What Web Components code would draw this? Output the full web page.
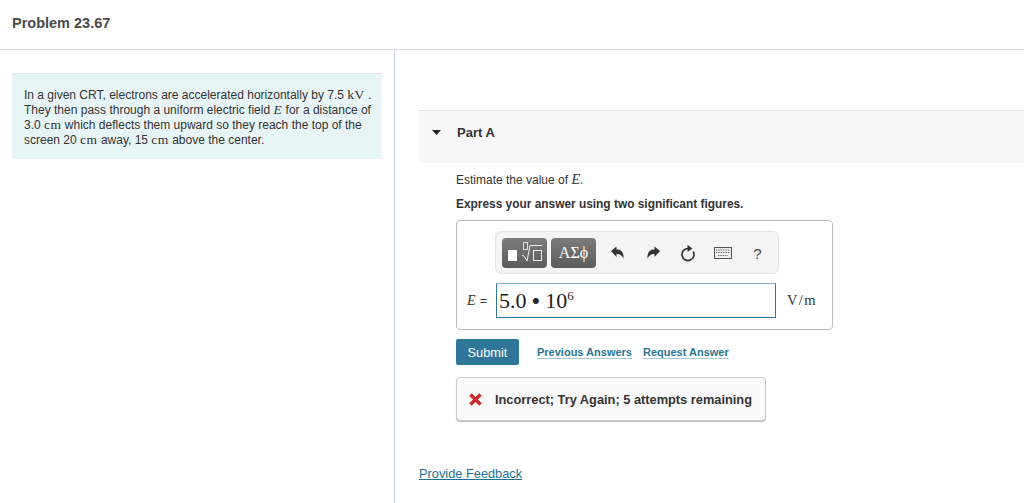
<!DOCTYPE html>
<html>
<head>
<meta charset="utf-8">
<style>
    html, body { margin: 0; height: 100%; background: #fff; overflow: hidden; }
    body { font-family: "Liberation Sans", Arial, sans-serif; color: #333; }
    b.m, i.m { font-family: "Liberation Serif", serif; font-weight: 400; font-size: 13.5px; line-height: 0; letter-spacing: 0.5px; }
    intro-panel div { white-space: nowrap; }
</style>
</head>
<body>
<problem-page>
    <problem-header slot="header">Problem 23.67</problem-header>
    <intro-panel slot="left">
        <div>In a given CRT, electrons are accelerated horizontally by 7.5&nbsp;<b class="m">kV</b>&nbsp;.</div>
        <div>They then pass through a uniform electric field <i class="m">E</i> for a distance of</div>
        <div>3.0&nbsp;<b class="m">cm</b> which deflects them upward so they reach the top of the</div>
        <div>screen 20&nbsp;<b class="m">cm</b> away, 15&nbsp;<b class="m">cm</b> above the center.</div>
    </intro-panel>
    <part-section slot="right"></part-section>
</problem-page>

<script>
class ProblemPage extends HTMLElement {
    connectedCallback() {
        this.attachShadow({ mode: 'open' });
        this.shadowRoot.innerHTML = `
            <style>
                :host { display: grid; grid-template-columns: 395px 1fr; grid-template-rows: 50px 453px; height: 503px; }
                .head { grid-column: 1 / 3; }
                .left { border-right: 1px solid #c5d5e4; padding: 23px 12px 0; }
                .right { padding-top: 60px; padding-left: 24px; }
            </style>
            <div class="head"><slot name="header"></slot></div>
            <div class="left"><slot name="left"></slot></div>
            <div class="right"><slot name="right"></slot></div>
        `;
    }
}

class ProblemHeader extends HTMLElement {
    connectedCallback() {
        this.attachShadow({ mode: 'open' });
        this.shadowRoot.innerHTML = `
            <style>
                :host { display: block; box-sizing: border-box; height: 50px; border-bottom: 1px solid #e0e0e0; padding: 14px 12px 0; font-size: 14.5px; line-height: 18px; font-weight: 700; color: #4a4a4a; }
            </style>
            <slot></slot>
        `;
    }
}

class IntroPanel extends HTMLElement {
    connectedCallback() {
        this.attachShadow({ mode: 'open' });
        this.shadowRoot.innerHTML = `
            <style>
                :host { display: block; box-sizing: border-box; width: 370px; height: 86px; background: #e8f5f7; border-top: 1px solid #e0e8ea; padding: 14px 10px 0 12px; font-size: 12px; line-height: 15px; color: #333; }
            </style>
            <slot></slot>
        `;
    }
}

class PartSection extends HTMLElement {
    connectedCallback() {
        this.attachShadow({ mode: 'open' });
        this.shadowRoot.innerHTML = `
            <style>
                :host { display: block; font-size: 12px; color: #333; }
                .bar { box-sizing: border-box; height: 53px; background: #f8f8f8; border-top: 1px solid #e2e2e2; display: flex; padding: 14px 0 0 13px; }
                .bar svg { width: 9px; height: 5px; margin-top: 5px; }
                .bar b { margin-left: 16px; font-size: 13px; line-height: 15px; }
                .body { padding: 9px 0 0 37px; }
                .q { line-height: 16px; }
                .q i { font-family: "Liberation Serif", serif; font-size: 14px; }
                .hint { margin-top: 8px; line-height: 16px; font-size: 11.9px; font-weight: 700; }
                .actions { display: flex; align-items: center; margin-top: 9px; }
                .submit { width: 63px; height: 26px; background: #2f7698; color: #fff; border-radius: 2px; font-size: 12.8px; line-height: 27px; text-align: center; }
                .link { margin-top: 2px; font-size: 11px; font-weight: 700; color: #2a7596; border-bottom: 1px solid #a9c9d8; line-height: 11px; }
                .first { margin-left: 18px; }
                .second { margin-left: 11px; }
                .feedback-link { display: inline-block; margin: 45px 0 0 -37px; font-size: 12.8px; line-height: 15px; color: #1f6f93; text-decoration: underline; }
            </style>
            <div class="bar">
                <svg viewBox="0 0 9 5"><path d="M0 0h9L4.500 5z" fill="#222"/></svg>
                <b>Part A</b>
            </div>
            <div class="body">
                <div class="q">Estimate the value of <i>E</i>.</div>
                <div class="hint">Express your answer using two significant figures.</div>
                <answer-box></answer-box>
                <div class="actions">
                    <div class="submit">Submit</div>
                    <span class="link first">Previous Answers</span>
                    <span class="link second">Request Answer</span>
                </div>
                <feedback-box>Incorrect; Try Again; 5 attempts remaining</feedback-box>
                <span class="feedback-link">Provide Feedback</span>
            </div>
        `;
    }
}

class AnswerBox extends HTMLElement {
    connectedCallback() {
        this.attachShadow({ mode: 'open' });
        this.shadowRoot.innerHTML = `
            <style>
                :host { display: block; box-sizing: border-box; width: 377px; height: 110px; margin-top: 8px; border: 1px solid #bbb; border-radius: 4px; padding: 10px 0 0 10px; font-family: "Liberation Serif", serif; }
                .row { display: flex; align-items: center; margin-top: 9px; }
                .lab { width: 29px; font-size: 14px; color: #333; white-space: nowrap; }
                .lab span { margin-left: 1px; font-size: 12px; font-family: "Liberation Sans", sans-serif; }
                .field { box-sizing: border-box; width: 280px; height: 35px; border: 1px solid #2f7698; border-top-color: #7fb0c6; padding-left: 2px; font-size: 22px; line-height: 34px; color: #222; white-space: nowrap; }
                .field sup { font-size: 13px; line-height: 0; vertical-align: 8px; }
                .dot { font-family: "Liberation Sans", sans-serif; font-size: 22px; }
                .unit { margin-left: 11px; font-size: 14.5px; color: #333; letter-spacing: 1.4px; }
            </style>
            <math-toolbar></math-toolbar>
            <div class="row">
                <div class="lab"><i>E</i> <span>=</span></div>
                <div class="field">5.0 <span class="dot">&#8226;</span> 10<sup>6</sup></div>
                <div class="unit">V/m</div>
            </div>
        `;
    }
}

class MathToolbar extends HTMLElement {
    connectedCallback() {
        this.attachShadow({ mode: 'open' });
        this.shadowRoot.innerHTML = `
            <style>
                :host { display: flex; box-sizing: border-box; width: 284px; height: 43px; margin-left: 28px; padding: 6px 0 6px 6px; align-items: flex-start; background: #f4f4f4; border: 1px solid #e4e4e4; border-radius: 6px; }
                .btn { flex: none; box-sizing: border-box; width: 45px; height: 30px; border-radius: 4px; background: linear-gradient(#7c7c7c, #5c5c5c); color: #fff; display: flex; align-items: center; justify-content: center; font: 16px "Liberation Serif", serif; }
                .btn + .btn { margin-left: 4px; }
                .tools { flex: none; display: flex; margin-left: 4px; }
                .tool { width: 35px; height: 30px; display: flex; align-items: center; justify-content: center; color: #444; font: 15px "Liberation Sans", sans-serif; }
            </style>
            <div class="btn">
                <svg width="45" height="30" viewBox="0 0 45 30">
                    <rect x="6" y="12" width="9" height="11" fill="#fff"/>
                    <rect x="21.500" y="4.500" width="4" height="7" fill="none" stroke="#ddd"/>
                    <path d="M20 17l2 1 3 5 3-15.500h12" fill="none" stroke="#eee"/>
                    <rect x="31.500" y="12.500" width="8" height="10" fill="none" stroke="#eee"/>
                </svg>
            </div>
            <div class="btn">&Alpha;&Sigma;&#981;</div>
            <div class="tools">
                <div class="tool"><svg width="14" height="14" viewBox="0 0 14 14"><path d="M0 5 5.500.5v3C10 3.500 13 6 12.500 12.500 11 9.500 9 8 5.500 8v3z" fill="#333"/></svg></div>
                <div class="tool"><svg width="14" height="14" viewBox="0 0 14 14"><path d="M14 5 8.500.5v3C4 3.500 1 6 1.500 12.500 3 9.500 5 8 8.500 8v3z" fill="#333"/></svg></div>
                <div class="tool"><svg width="16" height="18" viewBox="0 0 16 18"><path d="M8 4.500A6 6 0 1 0 13.200 7.500" fill="none" stroke="#333" stroke-width="1.700"/><path d="M7.500 1v7l5-3.500z" fill="#333"/></svg></div>
                <div class="tool"><svg width="18" height="12" viewBox="0 0 18 12"><rect x=".5" y=".5" width="17" height="11" fill="#eee" stroke="#555"/><path d="M2 3h14M2 5.500h14M4 8.500h10" stroke="#666" stroke-dasharray="1 .7" fill="none"/></svg></div>
                <div class="tool">?</div>
            </div>
        `;
    }
}

class FeedbackBox extends HTMLElement {
    connectedCallback() {
        this.attachShadow({ mode: 'open' });
        this.shadowRoot.innerHTML = `
            <style>
                :host { display: flex; align-items: center; box-sizing: border-box; width: 310px; height: 44px; margin-top: 12px; padding-left: 12px; background: #fafafa; border: 1px solid #ccc; border-radius: 4px; box-shadow: 0 1px 1px #bbb; font-size: 12.8px; font-weight: 700; color: #333; }
                svg { margin-right: 13px; }
            </style>
            <svg width="13" height="13" viewBox="0 0 13 13"><path d="M1.500 1.500l10 10M11.500 1.500l-10 10" stroke="#cc2a2a" stroke-width="3.400"/></svg>
            <slot></slot>
        `;
    }
}

customElements.define('problem-page', ProblemPage);
customElements.define('problem-header', ProblemHeader);
customElements.define('intro-panel', IntroPanel);
customElements.define('part-section', PartSection);
customElements.define('answer-box', AnswerBox);
customElements.define('math-toolbar', MathToolbar);
customElements.define('feedback-box', FeedbackBox);
</script>
</body>
</html>
